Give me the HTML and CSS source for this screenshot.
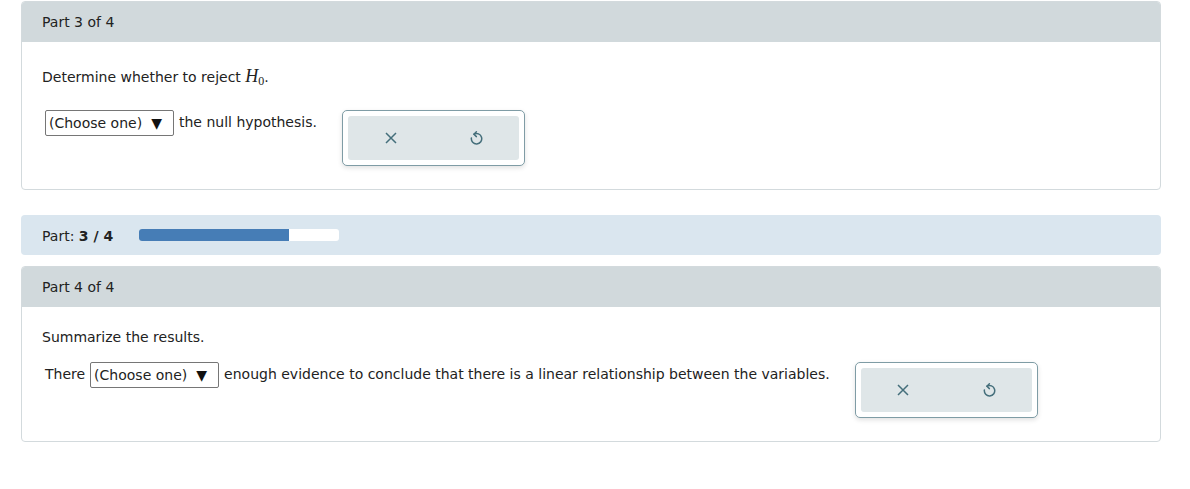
FILE: index.html
```html
<!DOCTYPE html>
<html>
<head>
<meta charset="utf-8">
<link rel="stylesheet" href="styles.css">
</head>
<body>
<div class="page">
  <section class="panel">
    <div class="panel-head">Part 3 of 4</div>
    <div class="panel-body body-a">
      <p class="prompt">Determine whether to reject <span class="math"><i>H</i><sub>0</sub></span>.</p>
      <div class="row">
        <span class="select">(Choose one)<span class="caret">▼</span></span>
        <span class="after">the null hypothesis.</span>
        <div class="tools">
          <div class="tools-inner">
            <button class="tool" aria-label="clear">
              <svg width="14" height="14" viewBox="0 0 14 14"><path d="M2 2 L12 12 M12 2 L2 12" stroke="#456f7b" stroke-width="1.5" fill="none"/></svg>
            </button>
            <button class="tool" aria-label="undo">
              <svg width="14" height="17" viewBox="0 0 14 17"><path d="M5 4.2 A5.2 5.2 0 1 1 2.4 7.9" stroke="#456f7b" stroke-width="1.5" fill="none" stroke-linecap="round"/><path d="M7.4 1.8 L4.9 4.2 L7.4 6.6" stroke="#456f7b" stroke-width="1.5" fill="none" stroke-linecap="round" stroke-linejoin="round"/></svg>
            </button>
          </div>
        </div>
      </div>
    </div>
  </section>

  <div class="progress">
    <span class="plabel">Part: <b>3 / 4</b></span>
    <div class="bar"><div class="fill" style="width:75%"></div></div>
  </div>

  <section class="panel">
    <div class="panel-head">Part 4 of 4</div>
    <div class="panel-body body-b">
      <p class="prompt">Summarize the results.</p>
      <div class="row">
        <span class="before">There</span>
        <span class="select">(Choose one)<span class="caret">▼</span></span>
        <span class="after">enough evidence to conclude that there is a linear relationship between the variables.</span>
        <div class="tools">
          <div class="tools-inner">
            <button class="tool" aria-label="clear">
              <svg width="14" height="14" viewBox="0 0 14 14"><path d="M2 2 L12 12 M12 2 L2 12" stroke="#456f7b" stroke-width="1.5" fill="none"/></svg>
            </button>
            <button class="tool" aria-label="undo">
              <svg width="14" height="17" viewBox="0 0 14 17"><path d="M5 4.2 A5.2 5.2 0 1 1 2.4 7.9" stroke="#456f7b" stroke-width="1.5" fill="none" stroke-linecap="round"/><path d="M7.4 1.8 L4.9 4.2 L7.4 6.6" stroke="#456f7b" stroke-width="1.5" fill="none" stroke-linecap="round" stroke-linejoin="round"/></svg>
            </button>
          </div>
        </div>
      </div>
    </div>
  </section>
</div>
</body>
</html>
```

FILE: styles.css
```css
* { box-sizing: border-box; }
html, body { margin: 0; padding: 0; background: #fff; }
body {
  font-family: "DejaVu Sans", Verdana, sans-serif;
  font-size: 14px;
  color: #222;
}
.page {
  width: 1140px;
  margin-left: 21px;
  padding-top: 1px;
}
.panel {
  border: 1px solid #d3dadd;
  border-radius: 4px;
  overflow: hidden;
}
.panel-head {
  background: #d1d9dc;
  height: 41px;
  line-height: 39px;
  padding-top: 2px;
  padding-left: 21px;
  margin: -1px -1px 0 -1px;
}
.panel-body {
  padding: 0 20px 0 20px;
}
.body-a { height: 147px; padding-top: 24px; }
.body-b { height: 134px; padding-top: 20px; }
.prompt {
  margin: 0;
  line-height: 20px;
  height: 20px;
}
.math { font-family: "Liberation Serif", "Times New Roman", serif; font-size: 18px; }
.math i { font-style: italic; }
.math sub { font-size: 12px; font-style: normal; vertical-align: -3px; line-height: 0; }
.row {
  display: flex;
  align-items: flex-start;
  padding-left: 3px;
}
.body-a .row { margin-top: 24px; }
.body-b .row { margin-top: 15px; }
.select {
  display: inline-flex;
  align-items: center;
  flex: none;
  height: 26px;
  width: 129px;
  border: 1px solid #767676;
  border-radius: 2px;
  padding-left: 3px;
  color: #222;
  background: #fff;
  white-space: nowrap;
}
.caret { margin-left: 9px; font-size: 14px; color: #111; }
.before { line-height: 24px; margin-right: 5px; }
.after { line-height: 24px; margin-left: 5px; white-space: nowrap; }
.tools {
  flex: none;
  margin-left: 25px;
  width: 183px;
  height: 56px;
  border: 1px solid #7f9ca5;
  border-radius: 5px;
  background: #fff;
  padding: 5px;
  box-shadow: 0 2px 5px rgba(0, 0, 0, 0.12);
}
.tools-inner {
  display: flex;
  height: 100%;
  background: #dfe6e8;
  border-radius: 3px;
}
.tool {
  flex: 1;
  border: 0;
  background: transparent;
  display: flex;
  align-items: center;
  justify-content: center;
  padding: 0;
}
.progress {
  margin-top: 25px;
  margin-bottom: 11px;
  height: 40px;
  background: #dae6ef;
  border-radius: 4px;
  display: flex;
  align-items: center;
  padding-left: 21px;
  padding-top: 1px;
}
.plabel { width: 97px; }
.plabel b { font-weight: bold; }
.bar {
  width: 200px;
  height: 12px;
  background: #fff;
  border-radius: 3px;
  overflow: hidden;
  margin-top: -1px;
}
.fill { height: 100%; background: #467db6; }
```
